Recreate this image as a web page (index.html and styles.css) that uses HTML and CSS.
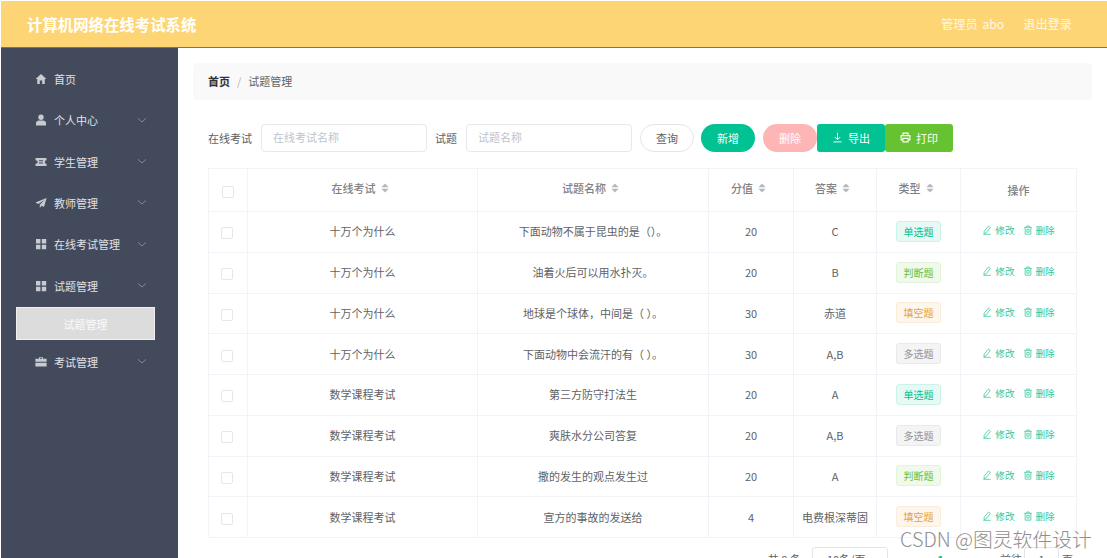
FILE: index.html
```html
<!DOCTYPE html>
<html lang="zh">
<head>
<meta charset="utf-8">
<title>计算机网络在线考试系统</title>
<link rel="stylesheet" href="styles.css">
</head>
<body>
<svg class="defs" width="0" height="0">
  <symbol id="i-home" viewBox="0 0 12 12"><path d="M6 1 .6 6h1.6v5h2.6V7.6h2.4V11h2.6V6h1.6z"/></symbol>
  <symbol id="i-user" viewBox="0 0 12 12"><circle cx="6" cy="3.2" r="2.7"/><path d="M1 11.5V9c0-1.6 1.6-2.6 3-2.6h4c1.4 0 3 1 3 2.6v2.5z"/></symbol>
  <symbol id="i-card" viewBox="0 0 12 12"><path d="M.5 2h11v2.2l-1.6.6v2.4l1.6.6V10H.5V7.8l2-.6V4.8l-2-.6zM4 4.2v1h4v-1zm0 2.4v1h4v-1z" fill-rule="evenodd"/></symbol>
  <symbol id="i-send" viewBox="0 0 12 12"><path d="M11.6 1 .4 5.6l3 1.4 6-4-4.6 4.8v3.2l1.8-2.2 2.4 1.2z"/></symbol>
  <symbol id="i-grid" viewBox="0 0 12 12"><path d="M1 1h4.4v4.4H1zM6.8 1h4.4v4.4H6.8zM1 6.8h4.4v4.4H1zM6.8 6.8h4.4v4.4H6.8z"/></symbol>
  <symbol id="i-case" viewBox="0 0 12 12"><path d="M4 1.2h4v1.6h3.6v3H.4v-3H4zM5 2v.8h2V2zM.4 6.8h11.2v3.8H.4z" fill-rule="evenodd"/></symbol>
  <symbol id="i-down" viewBox="0 0 12 12"><path d="M6 1v7M3 5.4 6 8.4l3-3M1.5 10.8h9" fill="none" stroke="currentColor" stroke-width="1"/></symbol>
  <symbol id="i-print" viewBox="0 0 12 12"><g fill="none" stroke="currentColor" stroke-width="1.2"><path d="M3.2 4V1.2h5.6V4"/><path d="M3 8.6H1.2V4h9.6v4.6H9"/><path d="M3.2 7h5.6v3.8H3.2z"/></g></symbol>
  <symbol id="i-edit" viewBox="0 0 12 12"><g fill="none" stroke="currentColor" stroke-width=".9"><path d="M7.8 1.2 10 3 5 9.4l-2.6.8.2-2.8z"/><path d="M1.5 11.2h9"/></g></symbol>
  <symbol id="i-trash" viewBox="0 0 12 12"><g fill="none" stroke="currentColor" stroke-width=".9"><path d="M1.4 2.8h9.2M4.4 2.6V1.2h3.2v1.4M2.6 2.8v8.2h6.8V2.8M4.6 5.2h2.8v3.4H4.6z"/></g></symbol>
  <symbol id="i-chev" viewBox="0 0 10 10"><path d="M1 3.4 5 7l4-3.6" fill="none" stroke="currentColor" stroke-width=".9"/></symbol>
  <symbol id="i-sort" viewBox="0 0 8 10"><path d="M4 .6 7.6 4.2H.4zM4 9.4.4 5.8h7.2z"/></symbol>
</svg>

<header class="topbar">
  <div class="brand">计算机网络在线考试系统</div>
  <div class="user"><span>管理员 abo</span><span>退出登录</span></div>
</header>

<div class="layout">
  <aside class="side">
    <div class="menu-item"><svg class="mi"><use href="#i-home"/></svg><span>首页</span></div>
    <div class="menu-item"><svg class="mi"><use href="#i-user"/></svg><span>个人中心</span><svg class="chev"><use href="#i-chev"/></svg></div>
    <div class="menu-item"><svg class="mi"><use href="#i-card"/></svg><span>学生管理</span><svg class="chev"><use href="#i-chev"/></svg></div>
    <div class="menu-item"><svg class="mi"><use href="#i-send"/></svg><span>教师管理</span><svg class="chev"><use href="#i-chev"/></svg></div>
    <div class="menu-item"><svg class="mi"><use href="#i-grid"/></svg><span>在线考试管理</span><svg class="chev"><use href="#i-chev"/></svg></div>
    <div class="menu-item"><svg class="mi"><use href="#i-grid"/></svg><span>试题管理</span><svg class="chev"><use href="#i-chev"/></svg></div>
    <div class="sub-item">试题管理</div>
    <div class="menu-item"><svg class="mi"><use href="#i-case"/></svg><span>考试管理</span><svg class="chev"><use href="#i-chev"/></svg></div>
  </aside>

  <main class="content">
    <nav class="crumb"><b>首页</b><i>/</i><span>试题管理</span></nav>

    <form class="filters">
      <label>在线考试</label>
      <div class="field">在线考试名称</div>
      <label class="label-2">试题</label>
      <div class="field">试题名称</div>
      <button type="button" class="btn btn-query">查询</button>
      <button type="button" class="btn btn-add">新增</button>
      <button type="button" class="btn btn-del">删除</button>
      <button type="button" class="btn btn-export"><svg class="bi"><use href="#i-down"/></svg>导出</button>
      <button type="button" class="btn btn-print"><svg class="bi"><use href="#i-print"/></svg>打印</button>
    </form>

    <table class="grid">
      <colgroup><col class="c1"><col class="c2"><col class="c3"><col class="c4"><col class="c5"><col class="c6"><col class="c7"></colgroup>
      <thead>
        <tr>
          <th><span class="check check-h"></span></th>
          <th><div class="th">在线考试<svg class="sort"><use href="#i-sort"/></svg></div></th>
          <th><div class="th">试题名称<svg class="sort"><use href="#i-sort"/></svg></div></th>
          <th><div class="th">分值<svg class="sort"><use href="#i-sort"/></svg></div></th>
          <th><div class="th">答案<svg class="sort"><use href="#i-sort"/></svg></div></th>
          <th><div class="th">类型<svg class="sort"><use href="#i-sort"/></svg></div></th>
          <th class="th-op">操作</th>
        </tr>
      </thead>
      <tbody>
        <tr><td><span class="check"></span></td><td>十万个为什么</td><td>下面动物不属于昆虫的是（）。</td><td>20</td><td>C</td><td><span class="tag t-single">单选题</span></td><td><div class="ops"><a><svg class="oi"><use href="#i-edit"/></svg>修改</a><a><svg class="oi"><use href="#i-trash"/></svg>删除</a></div></td></tr>
        <tr><td><span class="check"></span></td><td>十万个为什么</td><td>油着火后可以用水扑灭。</td><td>20</td><td>B</td><td><span class="tag t-judge">判断题</span></td><td><div class="ops"><a><svg class="oi"><use href="#i-edit"/></svg>修改</a><a><svg class="oi"><use href="#i-trash"/></svg>删除</a></div></td></tr>
        <tr><td><span class="check"></span></td><td>十万个为什么</td><td>地球是个球体，中间是（ ）。</td><td>30</td><td>赤道</td><td><span class="tag t-fill">填空题</span></td><td><div class="ops"><a><svg class="oi"><use href="#i-edit"/></svg>修改</a><a><svg class="oi"><use href="#i-trash"/></svg>删除</a></div></td></tr>
        <tr><td><span class="check"></span></td><td>十万个为什么</td><td>下面动物中会流汗的有（ ）。</td><td>30</td><td>A,B</td><td><span class="tag t-multi">多选题</span></td><td><div class="ops"><a><svg class="oi"><use href="#i-edit"/></svg>修改</a><a><svg class="oi"><use href="#i-trash"/></svg>删除</a></div></td></tr>
        <tr><td><span class="check"></span></td><td>数学课程考试</td><td>第三方防守打法生</td><td>20</td><td>A</td><td><span class="tag t-single">单选题</span></td><td><div class="ops"><a><svg class="oi"><use href="#i-edit"/></svg>修改</a><a><svg class="oi"><use href="#i-trash"/></svg>删除</a></div></td></tr>
        <tr><td><span class="check"></span></td><td>数学课程考试</td><td>爽肤水分公司答复</td><td>20</td><td>A,B</td><td><span class="tag t-multi">多选题</span></td><td><div class="ops"><a><svg class="oi"><use href="#i-edit"/></svg>修改</a><a><svg class="oi"><use href="#i-trash"/></svg>删除</a></div></td></tr>
        <tr><td><span class="check"></span></td><td>数学课程考试</td><td>撒的发生的观点发生过</td><td>20</td><td>A</td><td><span class="tag t-judge">判断题</span></td><td><div class="ops"><a><svg class="oi"><use href="#i-edit"/></svg>修改</a><a><svg class="oi"><use href="#i-trash"/></svg>删除</a></div></td></tr>
        <tr><td><span class="check"></span></td><td>数学课程考试</td><td>宣方的事故的发送给</td><td>4</td><td>电费根深蒂固</td><td><span class="tag t-fill">填空题</span></td><td><div class="ops"><a><svg class="oi"><use href="#i-edit"/></svg>修改</a><a><svg class="oi"><use href="#i-trash"/></svg>删除</a></div></td></tr>
      </tbody>
    </table>

    <div class="pager">
      <span>共 8 条</span>
      <div class="pg-select">10条/页<svg class="pg-chev"><use href="#i-chev"/></svg></div>
      <span class="pg-arrow">‹</span>
      <b class="pg-num">1</b>
      <span class="pg-arrow">›</span>
      <span class="pg-go">前往</span>
      <div class="pg-input">1</div>
      <span>页</span>
    </div>
  </main>
</div>

<div class="watermark">CSDN @图灵软件设计</div>
</body>
</html>
```

FILE: styles.css
```css
* { box-sizing: border-box; }
html, body { margin: 0; height: 558px; overflow: hidden; background: #fff; }
body {
  position: relative;
  padding: 1px 0 0 1px;
  font-family: "Noto Sans CJK SC", "Noto Sans", sans-serif;
  font-size: 11px;
  color: #606266;
}
.defs { position: absolute; }

.topbar {
  height: 47px;
  background: #fed575;
  border-bottom: 1px solid #7a7466;
  display: flex;
  align-items: center;
  justify-content: space-between;
  padding: 0 35px 0 26px;
  color: #fff;
}
.brand { font-size: 15.4px; font-weight: 700; }
.user { display: flex; gap: 19px; font-size: 12.2px; word-spacing: 2px; color: #fff8e6; }

.layout { display: flex; height: 510px; }

.side {
  width: 177px;
  flex: none;
  background: #424a5c;
  padding-top: 10.5px;
  color: #e0e1e5;
}
.menu-item {
  height: 41.3px;
  display: flex;
  align-items: center;
  padding-left: 34px;
  position: relative;
}
.mi { width: 12px; height: 12px; fill: #c8cacf; margin-right: 7px; flex: none; }
.chev {
  width: 10px; height: 10px;
  color: #8a909e;
  position: absolute;
  left: 136px;
  top: 15px;
}
.sub-item {
  margin: 1px 0 1.2px 15px;
  width: 139px;
  height: 33px;
  background: #dcdcdc;
  border: 1px solid #efefef;
  color: #fafafa;
  display: flex;
  align-items: center;
  justify-content: center;
}

.content { flex: 1; min-width: 0; padding: 15px 15px 0; }

.crumb {
  height: 37px;
  background: #f9f9f9;
  border-radius: 4px;
  display: flex;
  align-items: center;
  padding: 0 0 2px 15px;
  color: #606266;
}
.crumb b { color: #303133; font-weight: 700; }
.crumb i { font-style: normal; color: #b4b6ba; margin: 0 7px; }

.filters {
  display: flex;
  align-items: center;
  height: 28px;
  margin: 24px 0 16px 15px;
}
.filters label { margin-right: 9px; padding-bottom: 1px; color: #5f6165; }
.filters .label-2 { margin: 0 9px 0 8px; }
.field {
  width: 166px;
  height: 28px;
  border: 1px solid #e6e8ee;
  border-radius: 4px;
  padding-left: 11px;
  line-height: 25px;
  color: #c0c4cc;
}
.btn {
  height: 28px;
  border: 0;
  padding: 0 0 1px;
  font: inherit;
  color: #fff;
  display: flex;
  align-items: center;
  justify-content: center;
}
.btn-query { width: 54px; margin-left: 8px; border-radius: 14px; background: #fff; border: 1px solid #e3e5ea; color: #606266; }
.btn-add { width: 54px; margin-left: 7px; border-radius: 14px; background: #00c292; }
.btn-del { width: 54px; margin-left: 8px; border-radius: 14px; background: #fdb5b5; }
.btn-export { width: 68px; border-radius: 3px; background: #00c292; }
.btn-print { width: 68px; border-radius: 3px; background: #67c232; }
.bi { width: 11px; height: 11px; margin-right: 5px; }

.grid {
  margin-left: 15px;
  width: 868px;
  table-layout: fixed;
  border-collapse: collapse;
  border: 1px solid #f0f1f6;
}
.c1 { width: 39px; } .c2 { width: 230px; } .c3 { width: 231px; }
.c4 { width: 85px; } .c5 { width: 83px; } .c6 { width: 84px; } .c7 { width: 116px; }
.grid th, .grid td {
  border: 1px solid #f2f3f8;
  padding: 0 0 1px;
  text-align: center;
  font-weight: 400;
}
.grid thead tr { height: 43px; }
.grid tbody tr { height: 40.75px; }
.grid td { color: #606266; }
.grid th { color: #7f8186; font-weight: 500; }
.th { display: flex; align-items: center; justify-content: center; gap: 5px; margin-top: -4px; padding-right: 5px; }
.sort { width: 8px; height: 10px; fill: #b4b8c0; }
.check {
  display: inline-block;
  width: 12px; height: 12px;
  border: 1px solid #e6e7ec;
  border-radius: 2px;
  vertical-align: middle;
  margin-right: 2px;
}
.check-h { margin: 0; }

.tag {
  display: inline-block;
  width: 45px;
  height: 21px;
  line-height: 19px;
  border: 1px solid;
  border-radius: 3px;
  font-size: 10px;
  vertical-align: middle;
}
.t-single { background: #e6f9f4; border-color: #ccf3e9; color: #00c292; }
.t-judge { background: #f0f9eb; border-color: #e1f3d8; color: #67c23a; }
.t-fill { background: #fdf6ec; border-color: #faecd8; color: #e6a23c; }
.t-multi { background: #f4f4f5; border-color: #e9e9eb; color: #909399; }

.ops { display: flex; justify-content: center; gap: 8px; color: #2fc79f; font-size: 9.6px; margin-top: -2px; }
.ops a { display: flex; align-items: center; gap: 3px; }
.oi { width: 10px; height: 10px; }

.pager {
  margin: 9px 0 0 15px;
  width: 868px;
  height: 24px;
  display: flex;
  align-items: center;
  justify-content: flex-end;
  padding-right: 3px;
  color: #606266;
}
.pg-select {
  width: 76px; height: 24px;
  margin: 0 16px 0 11px;
  border: 1px solid #e3e5ea;
  border-radius: 3px;
  padding-left: 14px;
  line-height: 22px;
  position: relative;
}
.pg-chev { position: absolute; right: 4px; top: 7px; width: 10px; height: 10px; color: #b4b6ba; }
.pg-arrow { width: 10px; text-align: center; color: #a8abb2; font-size: 14px; }
.pg-num { margin: 0 20px 0 23px; color: #00c292; font-size: 12px; }
.pg-go { margin: 0 2px 0 26px; }
.pg-input {
  width: 35px; height: 24px;
  border: 1px solid #e3e5ea;
  border-radius: 3px;
  text-align: center;
  line-height: 22px;
  margin-right: 3px;
}

.watermark {
  position: absolute;
  left: 900px;
  top: 526px;
  font-size: 19.8px;
  line-height: 26px;
  font-weight: 300;
  color: #8f8f8f;
  white-space: nowrap;
}
```
